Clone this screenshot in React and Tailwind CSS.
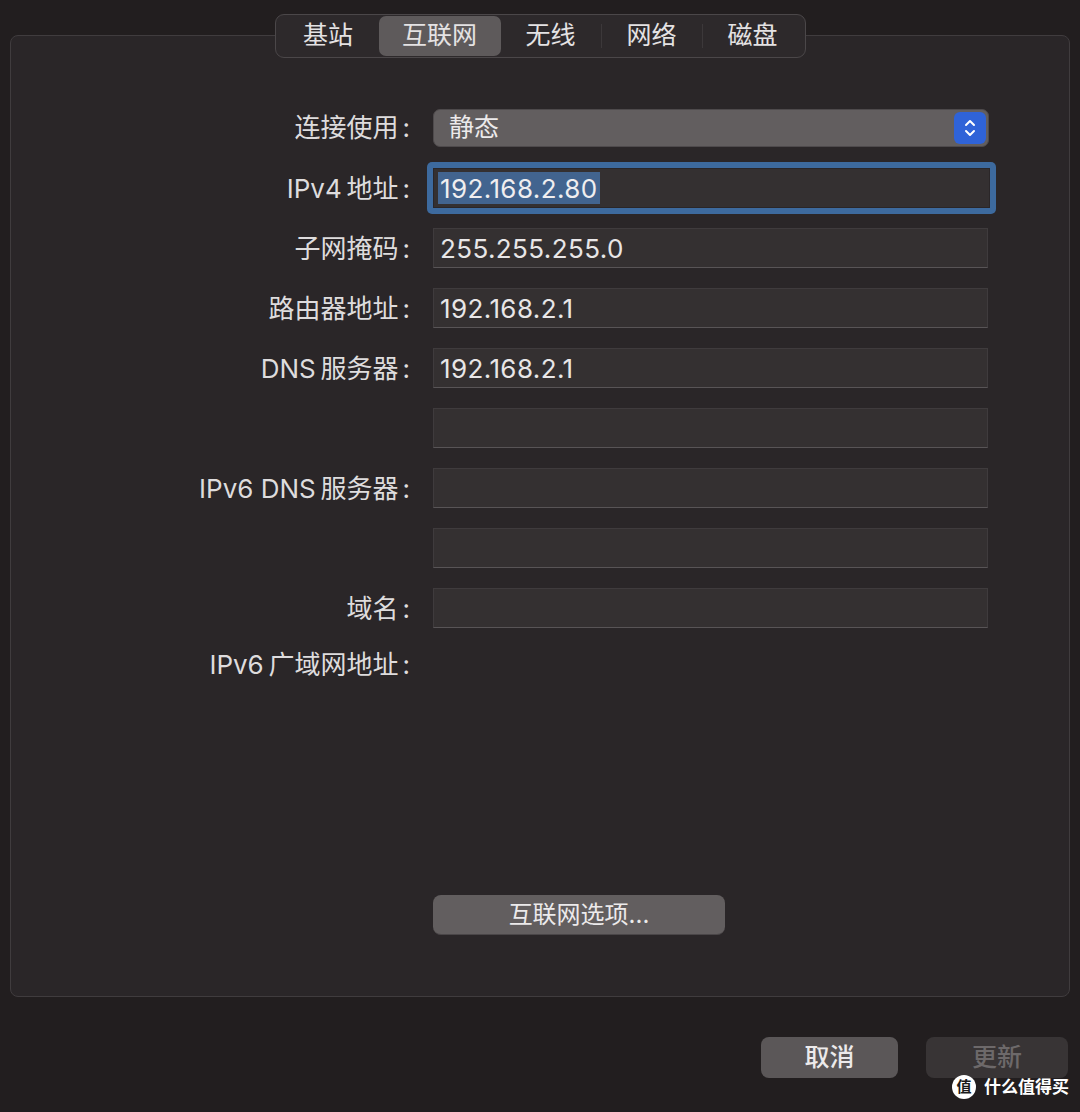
import React from "react";

const font = { fontFamily: 'Inter, "Noto Sans CJK SC", sans-serif' };

const tabs = ["基站", "互联网", "无线", "网络", "磁盘"];

const rows = [
  { label: "子网掩码", value: "255.255.255.0" },
  { label: "路由器地址", value: "192.168.2.1" },
  { label: "DNS\u2009服务器", value: "192.168.2.1" },
  { label: "", value: "" },
  { label: "IPv6 DNS\u2009服务器", value: "" },
  { label: "", value: "" },
  { label: "域名", value: "" },
];

const Field = ({ value }) => (
  <div className="w-[555px] h-[40px] bg-[#343031] border border-[#3f3b3d] border-b-[#585456] flex items-center pl-[6px] text-[26px] tracking-[0.4px] text-[#e8e6e7]">
    {value}
  </div>
);

const Label = ({ children }) => (
  <div className="w-[399px] text-right text-[26px] text-[#dedcdd] whitespace-pre">
    {children ? (
      <>
        {children}
        <span className="ml-[4px]">:</span>
      </>
    ) : null}
  </div>
);

const App = () => {
  return (
    <div
      className="w-[1080px] h-[1112px] bg-[#221e1f] relative overflow-hidden pt-[14px]"
      style={font}
    >
      {/* tab bar */}
      <div className="flex justify-center relative z-10">
        <div className="flex items-center h-[44px] bg-[#2d292b] border-[1.5px] border-[#4b4749] rounded-[9px] px-[2px]">
          {tabs.map((t, i) => (
            <React.Fragment key={t}>
              {i === 3 || i === 4 ? (
                <div className="w-[1px] h-[24px] bg-[#3c383a]" />
              ) : null}
              <div
                className={
                  "h-[40px] flex items-center justify-center text-[25px] text-[#e4e2e3] " +
                  (i === 1
                    ? "w-[122px] bg-[#5e5a5b] rounded-[7px]"
                    : i === 0
                    ? "w-[101px]"
                    : "w-[100px]")
                }
              >
                {t}
              </div>
            </React.Fragment>
          ))}
        </div>
      </div>

      {/* panel */}
      <div className="mx-[10px] -mt-[23px] h-[962px] bg-[#2a2628] border border-[#403c3e] rounded-[8px] pt-[72px] flex flex-col">
        {/* select */}
        <div className="flex items-center">
          <Label>连接使用</Label>
          <div className="ml-[23px] w-[556px] h-[38px] bg-[#625e5f] border border-[#4e4a4c] rounded-[7px] flex items-center justify-between pl-[15px] pr-[2px] text-[25px] text-[#eceaeb]">
            <span>静态</span>
            <div className="w-[32px] h-[32px] bg-[#2f63d8] rounded-[6px] flex items-center justify-center">
              <svg width="14" height="22" viewBox="0 0 14 22" fill="none">
                <path
                  d="M3 8 L7 4 L11 8 M3 14 L7 18 L11 14"
                  stroke="white"
                  strokeWidth="2"
                  strokeLinecap="round"
                  strokeLinejoin="round"
                />
              </svg>
            </div>
          </div>
        </div>

        {/* IPv4 */}
        <div className="flex items-center mt-[21px]">
          <Label>IPv4{"\u2009"}地址</Label>
          <div className="ml-[17px] p-[5px] border-[1px] border-transparent rounded-[5px] -my-[6px] bg-[#3d6a9e]">
            <div className="w-[557px] h-[40px] bg-[#343031] border border-[#2a2628] flex items-center pl-[4px] text-[26px] tracking-[0.4px] text-[#f0eeef]">
              <span className="bg-[#42648f] h-[32px] flex items-center px-[2px]">
                192.168.2.80
              </span>
            </div>
          </div>
        </div>

        {rows.map((r, i) => (
          <div key={i} className="flex items-center mt-[20px]">
            <Label>{r.label}</Label>
            <div className="ml-[23px]">
              <Field value={r.value} />
            </div>
          </div>
        ))}

        <div className="flex items-center mt-[20px] h-[32px]">
          <Label>IPv6{"\u2009"}广域网地址</Label>
        </div>

        <div className="flex mt-[215px]">
          <div className="w-[399px]" />
          <button className="ml-[23px] w-[292px] h-[40px] bg-[#625e5f] rounded-[8px] border-b border-[#4a4648] text-[24px] text-[#eceaeb]">
            互联网选项...
          </button>
        </div>
      </div>

      {/* footer buttons */}
      <div className="flex justify-end gap-[28px] mt-[40px] pr-[12px]">
        <button className="w-[137px] h-[41px] bg-[#5b5758] rounded-[8px] text-[25px] font-medium text-[#eceaeb]">
          取消
        </button>
        <button className="w-[142px] h-[41px] bg-[#383435] rounded-[8px] text-[25px] font-medium text-[#6d696a]">
          更新
        </button>
      </div>

      {/* watermark */}
      <div className="absolute right-[11px] bottom-[12px] flex items-center gap-[8px]">
        <div className="w-[24px] h-[24px] rounded-full bg-white flex items-center justify-center text-[15px] font-bold text-[#1a1a1a]">
          值
        </div>
        <span className="text-[17px] text-white font-bold">什么值得买</span>
      </div>
    </div>
  );
};

export default App;
